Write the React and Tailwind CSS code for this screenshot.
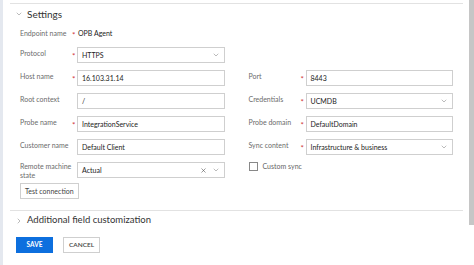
import { ChevronDown, ChevronRight, X } from 'lucide-react'

const font = { fontFamily: 'Lato, "Liberation Sans", sans-serif' }

function Req() {
  return <span className="w-[5px] text-[8px] leading-none text-[#d0343a]">*</span>
}

function Field({ label, required, value, select, clear, labelLines }) {
  return (
    <div className="flex items-start h-[16px]">
      {labelLines ? (
        <div className="w-[52px] whitespace-nowrap pt-[0px] text-[7px] leading-[9px] text-[#6b6b6b]">
          {labelLines.map((l) => <div key={l}>{l}</div>)}
        </div>
      ) : (
        <div className="w-[52px] whitespace-nowrap pt-[1px] text-[7px] leading-[11px] text-[#6b6b6b]">{label}</div>
      )}
      <div className="w-[5px] pt-[5px] flex justify-center">{required && <Req />}</div>
      <div className="flex-1 h-[16px] border border-[#cfcfcf] bg-white flex items-center pl-[4px] pr-[4px]">
        <span className="flex-1 text-[7px] text-[#222]">{value}</span>
        {clear && <X size={7} className="text-[#555] mr-[5px]" strokeWidth={2} />}
        {select && <ChevronDown size={8} className="text-[#777]" strokeWidth={1.5} />}
      </div>
    </div>
  )
}

export default function App() {
  return (
    <div className="w-[474px] h-[265px] bg-white flex overflow-hidden" style={font}>
      <div className="w-[3px] bg-[#e4e8ef]" />
      <div className="flex-1 flex flex-col pl-[7px] pr-[6px] pt-[3px]">
        <div className="border-t border-[#e2e2e2]" />
        <div className="flex items-center h-[18px] mt-[1px] pl-[5px] gap-[4px]">
          <ChevronDown size={8} className="text-[#777]" strokeWidth={1.5} />
          <span className="text-[10px] text-[#333]">Settings</span>
        </div>
        <div className="pl-[10px] pr-[10px] flex flex-col">
          <div className="flex items-center h-[12px] mt-[4px]">
            <div className="w-[52px] whitespace-nowrap text-[7px] text-[#6b6b6b]">Endpoint name</div>
            <div className="w-[5px] flex justify-center pt-[3px]"><Req /></div>
            <span className="ml-[1px] text-[7px] text-[#222]">OPB Agent</span>
          </div>
          <div className="grid grid-cols-2 gap-x-[24px] gap-y-[7px] mt-[8px]">
            <Field label="Protocol" required value="HTTPS" select />
            <div />
            <Field label="Host name" required value="16.103.31.14" />
            <Field label="Port" required value="8443" />
            <Field label="Root context" value="/" />
            <Field label="Credentials" required value="UCMDB" select />
            <Field label="Probe name" required value="IntegrationService" />
            <Field label="Probe domain" required value="DefaultDomain" />
            <Field label="Customer name" value="Default Client" />
            <Field label="Sync content" required value="Infrastructure & business" select />
            <Field labelLines={['Remote machine', 'state']} value="Actual" select clear />
            <div className="flex items-center gap-[5px] h-[9px]">
              <div className="w-[9px] h-[9px] border border-[#888] bg-white" />
              <span className="text-[7px] text-[#666]">Custom sync</span>
            </div>
          </div>
          <button className="self-start mt-[5px] h-[16px] px-[4px] border border-[#cfcfcf] bg-white text-[7px] text-[#444]">
            Test connection
          </button>
        </div>
        <div className="border-t border-[#e2e2e2] mt-[11px]" />
        <div className="flex items-center h-[17px] mt-[1px] pl-[5px] gap-[4px]">
          <ChevronRight size={8} className="text-[#777]" strokeWidth={1.5} />
          <span className="text-[9.5px] text-[#333]">Additional field customization</span>
        </div>
        <div className="flex gap-[10px] mt-[8px] pl-[6px]">
          <button className="w-[37px] h-[16px] bg-[#0d6fde] text-white text-[6.5px] font-bold">SAVE</button>
          <button className="w-[37px] h-[16px] border border-[#cfcfcf] bg-white text-[#444] text-[6.5px] font-semibold">CANCEL</button>
        </div>
      </div>
      <div className="w-[5px] flex flex-col">
        <div className="h-[225px] bg-[#c6c6c6]" />
      </div>
    </div>
  )
}
